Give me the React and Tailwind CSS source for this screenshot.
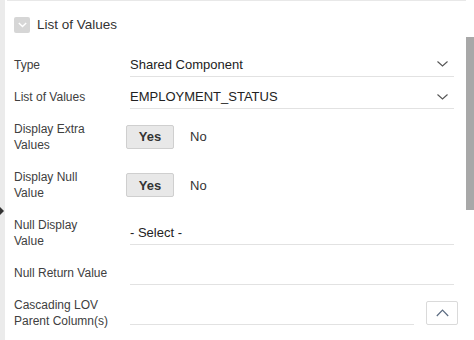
import React from "react";

function ChevronDown({ className = "" }) {
  return (
    <svg width="11" height="6" viewBox="0 0 11 6" className={className}>
      <path d="M0.5 0.5 L5.5 5 L10.5 0.5" fill="none" stroke="#555" strokeWidth="1.1" />
    </svg>
  );
}

function Label({ children }) {
  return (
    <div className="w-[116px] shrink-0 text-[12px] leading-[16px] text-[#404040]">{children}</div>
  );
}

function SelectField({ value }) {
  return (
    <div className="flex h-full w-[324px] items-center justify-between border-b border-[#e2e2e2] pr-[6px]">
      <span className="text-[13px] text-[#222]">{value}</span>
      <ChevronDown />
    </div>
  );
}

function YesNo() {
  return (
    <div className="flex items-center">
      <div className="ml-[-4px] flex h-[24px] w-[48px] items-center justify-center rounded-[2px] border border-[#cfcfcf] bg-[#e8e8e8] text-[13px] font-bold text-[#333]">
        Yes
      </div>
      <span className="ml-[16px] text-[13px] text-[#333]">No</span>
    </div>
  );
}

export default function App() {
  return (
    <div
      className="relative flex h-[340px] w-[474px] overflow-hidden bg-white"
      style={{ fontFamily: '"Liberation Sans", Arial, sans-serif' }}
    >
      <div className="relative h-full w-[5px] shrink-0 bg-[#ebebeb]">
        <div className="absolute left-0 top-[207px] h-0 w-0 border-y-[4px] border-l-[4px] border-y-transparent border-l-[#333]" />
      </div>
      <div className="flex w-[461px] flex-col">
        <div className="ml-[2px] h-px w-[459px] bg-[#e8e8e8]" />
        <div className="flex items-center pl-[9px] pt-[14px]">
          <div className="flex h-[16px] w-[16px] items-center justify-center rounded-[2px] bg-[#d6d6d6]">
            <svg width="9" height="6" viewBox="0 0 9 6">
              <path d="M0.8 1 L4.5 4.6 L8.2 1" fill="none" stroke="#fff" strokeWidth="1.4" />
            </svg>
          </div>
          <span className="ml-[7px] text-[13.5px] text-[#333]">List of Values</span>
        </div>

        <div className="ml-[9px] mt-[17px] flex h-[25px] items-center">
          <Label>Type</Label>
          <SelectField value="Shared Component" />
        </div>
        <div className="ml-[9px] mt-[8px] flex h-[24px] items-center">
          <Label>List of Values</Label>
          <SelectField value="EMPLOYMENT_STATUS" />
        </div>
        <div className="ml-[9px] mt-[15px] flex h-[25px] items-center">
          <Label>
            Display Extra
            <br />
            Values
          </Label>
          <YesNo />
        </div>
        <div className="ml-[9px] mt-[24px] flex h-[24px] items-center">
          <Label>
            Display Null
            <br />
            Value
          </Label>
          <YesNo />
        </div>
        <div className="ml-[9px] mt-[24px] flex h-[24px] items-center">
          <Label>
            Null Display
            <br />
            Value
          </Label>
          <div className="flex h-full w-[324px] items-center border-b border-[#e2e2e2]">
            <span className="text-[13px] text-[#222]">- Select -</span>
          </div>
        </div>
        <div className="ml-[9px] mt-[15px] flex h-[25px] items-center">
          <Label>Null Return Value</Label>
          <div className="h-full w-[324px] border-b border-[#e2e2e2]" />
        </div>
        <div className="ml-[9px] mt-[16px] flex h-[24px] items-center">
          <Label>
            Cascading LOV
            <br />
            Parent Column(s)
          </Label>
          <div className="h-full w-[284px] border-b border-[#e2e2e2]" />
          <div className="ml-[12px] flex h-[24px] w-[32px] items-center justify-center rounded-[2px] border border-[#dadada] bg-white">
            <svg width="13" height="8" viewBox="0 0 13 8">
              <path d="M0.8 7 L6.5 1.2 L12.2 7" fill="none" stroke="#5b6b80" strokeWidth="1.2" />
            </svg>
          </div>
        </div>
      </div>
      <div className="absolute left-[466px] top-[37px] h-[173px] w-[8px] bg-[#a8a8a8]" />
    </div>
  );
}
